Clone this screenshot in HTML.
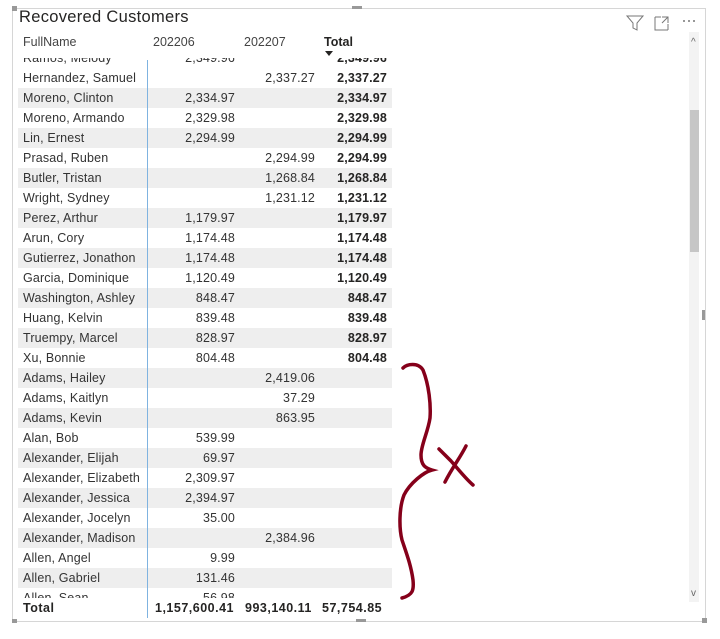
<!DOCTYPE html>
<html><head><style>
body{margin:0;width:720px;height:639px;background:#fff;position:relative;overflow:hidden;font-family:"Liberation Sans",sans-serif;}
.frame{position:absolute;left:12px;top:8px;width:694px;height:614px;border:1px solid #d6d6d6;box-sizing:border-box}
.title{position:absolute;left:19px;top:8px;font-size:16.5px;color:#252423;letter-spacing:0.3px}
.hdr{position:absolute;top:35px;font-size:12.5px;color:#444}
.body{position:absolute;left:18px;top:58px;width:374px;height:540px;overflow:hidden}
.row{position:absolute;left:0;width:374px;height:20px;font-size:12.5px;color:#333;line-height:20px;letter-spacing:0.15px}
.row.g{background:#eeeeee}
.row span{position:absolute}
.n{left:5px}
.a{right:157px}
.b{right:77px}
.t{right:5px;font-weight:bold;color:#252423}
.tot{position:absolute;top:601px;font-size:12.5px;font-weight:bold;color:#252423;letter-spacing:0.5px}
</style></head><body>
<div class="frame"></div>
<div style="position:absolute;left:12px;top:6px;width:5px;height:5px;background:#999"></div>
<div style="position:absolute;left:352px;top:6px;width:10px;height:3px;background:#999"></div>
<div style="position:absolute;left:12px;top:619px;width:5px;height:4px;background:#999"></div>
<div style="position:absolute;left:356px;top:619px;width:10px;height:3px;background:#999"></div>
<div style="position:absolute;left:702px;top:310px;width:3px;height:10px;background:#999"></div>
<div style="position:absolute;left:702px;top:618px;width:5px;height:5px;background:#999"></div>
<div class="title">Recovered Customers</div>
<div class="hdr" style="left:23px">FullName</div>
<div class="hdr" style="left:153px">202206</div>
<div class="hdr" style="left:244px">202207</div>
<div class="hdr" style="left:324px;font-weight:bold;color:#252423">Total</div>
<div style="position:absolute;left:325px;top:51px;width:0;height:0;border-left:4px solid transparent;border-right:4px solid transparent;border-top:5px solid #252423"></div>
<svg style="position:absolute;left:624px;top:12px" width="80" height="20">
<path d="M3 4 H19 L13 11 V18 L9 16 V11 Z" fill="none" stroke="#777" stroke-width="1"/>
<path d="M31 5 V18 H44 M31 5 H37 M44 18 V12 M38 5 H44 V11 M44 5 L38 11" fill="none" stroke="#777" stroke-width="1"/>
<circle cx="60" cy="9" r="1" fill="#777"/><circle cx="65" cy="9" r="1" fill="#777"/><circle cx="70" cy="9" r="1" fill="#777"/>
</svg>
<div style="position:absolute;left:689px;top:32px;width:10px;height:570px;background:#f3f3f3"></div>
<div style="position:absolute;left:690px;top:110px;width:9px;height:142px;background:#c6c6c6"></div>
<div style="position:absolute;left:691px;top:37px;font-size:10px;color:#666">^</div>
<div style="position:absolute;left:691px;top:588px;font-size:10px;color:#666">v</div>
<div class="body">
<div class="row" style="top:-10px"><span class="n">Ramos, Melody</span><span class="a">2,349.96</span><span class="t">2,349.96</span></div>
<div class="row" style="top:10px"><span class="n">Hernandez, Samuel</span><span class="b">2,337.27</span><span class="t">2,337.27</span></div>
<div class="row g" style="top:30px"><span class="n">Moreno, Clinton</span><span class="a">2,334.97</span><span class="t">2,334.97</span></div>
<div class="row" style="top:50px"><span class="n">Moreno, Armando</span><span class="a">2,329.98</span><span class="t">2,329.98</span></div>
<div class="row g" style="top:70px"><span class="n">Lin, Ernest</span><span class="a">2,294.99</span><span class="t">2,294.99</span></div>
<div class="row" style="top:90px"><span class="n">Prasad, Ruben</span><span class="b">2,294.99</span><span class="t">2,294.99</span></div>
<div class="row g" style="top:110px"><span class="n">Butler, Tristan</span><span class="b">1,268.84</span><span class="t">1,268.84</span></div>
<div class="row" style="top:130px"><span class="n">Wright, Sydney</span><span class="b">1,231.12</span><span class="t">1,231.12</span></div>
<div class="row g" style="top:150px"><span class="n">Perez, Arthur</span><span class="a">1,179.97</span><span class="t">1,179.97</span></div>
<div class="row" style="top:170px"><span class="n">Arun, Cory</span><span class="a">1,174.48</span><span class="t">1,174.48</span></div>
<div class="row g" style="top:190px"><span class="n">Gutierrez, Jonathon</span><span class="a">1,174.48</span><span class="t">1,174.48</span></div>
<div class="row" style="top:210px"><span class="n">Garcia, Dominique</span><span class="a">1,120.49</span><span class="t">1,120.49</span></div>
<div class="row g" style="top:230px"><span class="n">Washington, Ashley</span><span class="a">848.47</span><span class="t">848.47</span></div>
<div class="row" style="top:250px"><span class="n">Huang, Kelvin</span><span class="a">839.48</span><span class="t">839.48</span></div>
<div class="row g" style="top:270px"><span class="n">Truempy, Marcel</span><span class="a">828.97</span><span class="t">828.97</span></div>
<div class="row" style="top:290px"><span class="n">Xu, Bonnie</span><span class="a">804.48</span><span class="t">804.48</span></div>
<div class="row g" style="top:310px"><span class="n">Adams, Hailey</span><span class="b">2,419.06</span></div>
<div class="row" style="top:330px"><span class="n">Adams, Kaitlyn</span><span class="b">37.29</span></div>
<div class="row g" style="top:350px"><span class="n">Adams, Kevin</span><span class="b">863.95</span></div>
<div class="row" style="top:370px"><span class="n">Alan, Bob</span><span class="a">539.99</span></div>
<div class="row g" style="top:390px"><span class="n">Alexander, Elijah</span><span class="a">69.97</span></div>
<div class="row" style="top:410px"><span class="n">Alexander, Elizabeth</span><span class="a">2,309.97</span></div>
<div class="row g" style="top:430px"><span class="n">Alexander, Jessica</span><span class="a">2,394.97</span></div>
<div class="row" style="top:450px"><span class="n">Alexander, Jocelyn</span><span class="a">35.00</span></div>
<div class="row g" style="top:470px"><span class="n">Alexander, Madison</span><span class="b">2,384.96</span></div>
<div class="row" style="top:490px"><span class="n">Allen, Angel</span><span class="a">9.99</span></div>
<div class="row g" style="top:510px"><span class="n">Allen, Gabriel</span><span class="a">131.46</span></div>
<div class="row" style="top:530px"><span class="n">Allen, Sean</span><span class="a">56.98</span></div>
</div>
<div style="position:absolute;left:147px;top:60px;width:1px;height:558px;background:#7fb3e0"></div>
<div class="tot" style="left:23px">Total</div>
<div class="tot" style="left:155px">1,157,600.41</div>
<div class="tot" style="left:245px">993,140.11</div>
<div class="tot" style="left:322px">57,754.85</div>
<svg style="position:absolute;left:0;top:0" width="720" height="639">
<path d="M403 368 C407 364 418 362 423 370 C429 385 431 405 430 418 C428 432 421 445 421 455 C421 465 425 468 432 470 C424 472 410 483 404 495 C399 508 399 528 402 540 C406 552 411 565 413 580 C414 590 413 595 402 598" fill="none" stroke="#85001a" stroke-width="3.5" stroke-linecap="round"/>
<path d="M439 449 L451 461 C459 470 465 478 473 485 M466 446 C460 458 452 468 445 482" fill="none" stroke="#85001a" stroke-width="3.5" stroke-linecap="round"/>
</svg>
</body></html>
